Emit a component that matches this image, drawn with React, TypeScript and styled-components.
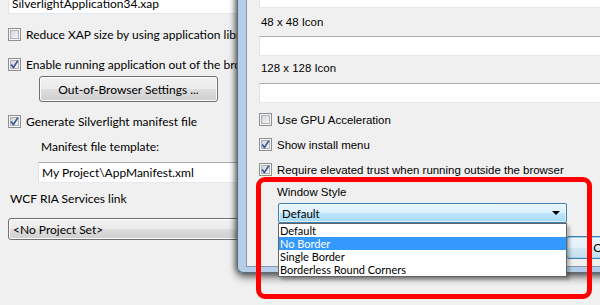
import React from 'react';
import styled, { createGlobalStyle } from 'styled-components';

const GlobalStyle = createGlobalStyle`
  html, body { margin: 0; padding: 0; background: #f0f0f0; }
  * { box-sizing: border-box; }
`;

const Desktop = styled.div`
  position: relative;
  width: 600px;
  height: 305px;
  overflow: hidden;
  background: #f0f0f0;
  color: #000;
`;

const PropertyPage = styled.div`
  position: absolute;
  left: 0;
  top: -8px;
  width: 340px;
  padding-left: 8px;
  display: flex;
  flex-direction: column;
  font-family: Lato, 'Noto Sans', sans-serif;
  font-size: 12px;
`;

const TextBox = styled.div<{ $mt?: number; $ml?: number; $w: number; $h?: number }>`
  margin-top: ${({ $mt }) => $mt ?? 0}px;
  margin-left: ${({ $ml }) => $ml ?? 0}px;
  width: ${({ $w }) => $w}px;
  height: ${({ $h }) => $h ?? 22}px;
  background: #fff;
  border: 1px solid #abadb3;
  border-left-color: #e2e3ea;
  border-right-color: #dbdfe6;
  border-bottom-color: #e3e9ef;
  padding: 0 3px;
  display: flex;
  align-items: center;
  white-space: nowrap;
`;

const CheckRow = styled.div<{ $mt: number }>`
  margin-top: ${({ $mt }) => $mt}px;
  height: 15px;
  display: flex;
  align-items: center;
  gap: 5px;
  white-space: nowrap;
`;

const Label = styled.div<{ $mt: number; $ml: number }>`
  margin-top: ${({ $mt }) => $mt}px;
  margin-left: ${({ $ml }) => $ml}px;
  height: 16px;
  line-height: 16px;
  white-space: nowrap;
`;

const PushButton = styled.div<{ $mt: number; $ml: number; $w: number }>`
  margin-top: ${({ $mt }) => $mt}px;
  margin-left: ${({ $ml }) => $ml}px;
  width: ${({ $w }) => $w}px;
  height: 26px;
  border: 1px solid #707070;
  border-radius: 3px;
  background: linear-gradient(#f2f2f2 0%, #ebebeb 50%, #dddddd 51%, #cfcfcf 100%);
  box-shadow: inset 0 0 0 1px #fcfcfc;
  display: flex;
  align-items: center;
  justify-content: center;
  white-space: nowrap;
`;

const ComboBox = styled.div<{ $mt: number; $w: number }>`
  margin-top: ${({ $mt }) => $mt}px;
  width: ${({ $w }) => $w}px;
  height: 22px;
  border: 1px solid #707070;
  border-radius: 3px;
  background: linear-gradient(#f2f2f2 0%, #ebebeb 50%, #dddddd 51%, #cfcfcf 100%);
  box-shadow: inset 0 0 0 1px #fcfcfc;
  padding-left: 4px;
  display: flex;
  align-items: center;
  white-space: nowrap;
`;

/* dialog window */
const DialogFrame = styled.div`
  position: absolute;
  left: 237px;
  top: -30px;
  width: 420px;
  height: 303px;
  padding: 0 0 5px 8px;
  border: 1px solid #5d6a78;
  border-right: none;
  border-bottom-left-radius: 6px;
  background: linear-gradient(90deg, #b4cde8 0%, #c6dbf1 40%, #aac6e4 100%);
  box-shadow: 0 4px 9px rgba(0, 0, 0, 0.6), -2px 0 5px rgba(0, 0, 0, 0.35);
`;

const DialogClient = styled.div`
  height: 100%;
  background: #f0f0f0;
  border: 1px solid #8597ad;
  border-right: none;
  border-top: none;
  padding-left: 12px;
  display: flex;
  flex-direction: column;
  font-family: 'Liberation Sans', Arial, sans-serif;
  font-size: 11.45px;
`;

const DialogLabel = styled.div<{ $mt: number; $ml?: number }>`
  margin-top: ${({ $mt }) => $mt}px;
  margin-left: ${({ $ml }) => $ml ?? 2}px;
  height: 16px;
  line-height: 16px;
  white-space: nowrap;
`;

const ComboWrap = styled.div`
  position: relative;
  margin-top: 3px;
  margin-left: 19px;
  width: 289px;
  font-family: Lato, 'Noto Sans', sans-serif;
  font-size: 11.5px;
`;

const OpenCombo = styled.div`
  height: 20px;
  border: 1px solid #3c7fb1;
  border-radius: 2px;
  background: linear-gradient(#eaf6fd 0%, #d9f0fc 50%, #bee6fd 51%, #a7d9f5 100%);
  box-shadow: inset 0 0 0 1px rgba(255, 255, 255, 0.6);
  padding: 0 6px 0 3px;
  display: flex;
  align-items: center;
  justify-content: space-between;
`;

const Arrow = styled.span`
  width: 0;
  height: 0;
  border-left: 4px solid transparent;
  border-right: 4px solid transparent;
  border-top: 4px solid #000;
`;

const DropList = styled.div`
  position: absolute;
  left: 0;
  top: 100%;
  width: 289px;
  background: #fff;
  border: 1px solid #646464;
  box-shadow: 3px 3px 3px rgba(0, 0, 0, 0.25);
  z-index: 3;
  font-size: 11px;
`;

const DropItem = styled.div<{ $selected?: boolean }>`
  height: 13px;
  line-height: 13px;
  padding-left: 1px;
  background: ${({ $selected }) => ($selected ? '#3399ff' : 'transparent')};
  color: ${({ $selected }) => ($selected ? '#fff' : '#000')};
  white-space: nowrap;
  overflow: hidden;
`;

const DefaultButton = styled.div`
  margin-top: 13px;
  margin-left: 307px;
  width: 72px;
  height: 23px;
  border: 1px solid #3c7fb1;
  border-radius: 3px;
  background: linear-gradient(#eaf6fd 0%, #e4f1f9 50%, #d3e8f4 51%, #c3dcec 100%);
  box-shadow: inset 0 0 0 1px #9cd5f4;
  display: flex;
  align-items: center;
  justify-content: center;
  font-family: Lato, 'Noto Sans', sans-serif;
  font-size: 12px;
`;

const Highlight = styled.div`
  position: absolute;
  left: 256px;
  top: 177px;
  width: 336px;
  height: 122px;
  border: 5px solid #ff0000;
  border-radius: 9px;
  z-index: 5;
  pointer-events: none;
`;

const CheckBox = ({ checked }: { checked?: boolean }) => (
  <svg width="13" height="13" viewBox="0 0 13 13">
    <defs>
      <linearGradient id="cbfill" x1="0" y1="0" x2="1" y2="1">
        <stop offset="0" stopColor="#cfd3d9" />
        <stop offset="1" stopColor="#f8f8f8" />
      </linearGradient>
    </defs>
    <rect x="0.5" y="0.5" width="12" height="12" fill="#f6f6f6" stroke="#8e8f8f" />
    <rect x="2.5" y="2.5" width="8" height="8" fill="url(#cbfill)" stroke="#aeb3b9" />
    {checked && (
      <path d="M3.2 6.4 L5.4 9.6 L9.8 2.6" stroke="#3f5497" strokeWidth="1.7" fill="none" strokeLinejoin="round" />
    )}
  </svg>
);

const windowStyles = ['Default', 'No Border', 'Single Border', 'Borderless Round Corners'];

export default function App() {
  return (
    <Desktop>
      <GlobalStyle />
      <PropertyPage>
        <TextBox $w={330}>SilverlightApplication34.xap</TextBox>
        <CheckRow $mt={13}>
          <CheckBox />
          <span>Reduce XAP size by using application library caching</span>
        </CheckRow>
        <CheckRow $mt={15}>
          <CheckBox checked />
          <span>Enable running application out of the browser</span>
        </CheckRow>
        <PushButton $mt={4} $ml={31} $w={179}>Out-of-Browser Settings ...</PushButton>
        <CheckRow $mt={12}>
          <CheckBox checked />
          <span>Generate Silverlight manifest file</span>
        </CheckRow>
        <Label $mt={10} $ml={33}>Manifest file template:</Label>
        <TextBox $mt={7} $ml={30} $w={300} $h={21}>My Project\AppManifest.xml</TextBox>
        <Label $mt={8} $ml={2}>WCF RIA Services link</Label>
        <ComboBox $mt={11} $w={330}>&lt;No Project Set&gt;</ComboBox>
      </PropertyPage>

      <DialogFrame>
        <DialogClient>
          <TextBox $mt={16} $w={400} $h={21} />
          <DialogLabel $mt={6}>48 x 48 Icon</DialogLabel>
          <TextBox $mt={6} $w={400} $h={20} />
          <DialogLabel $mt={4}>128 x 128 Icon</DialogLabel>
          <TextBox $mt={7} $w={400} $h={20} />
          <CheckRow $mt={9}>
            <CheckBox />
            <span>Use GPU Acceleration</span>
          </CheckRow>
          <CheckRow $mt={10}>
            <CheckBox checked />
            <span>Show install menu</span>
          </CheckRow>
          <CheckRow $mt={10}>
            <CheckBox checked />
            <span>Require elevated trust when running outside the browser</span>
          </CheckRow>
          <DialogLabel $mt={7} $ml={18}>Window Style</DialogLabel>
          <ComboWrap>
            <OpenCombo>
              <span>Default</span>
              <Arrow />
            </OpenCombo>
            <DropList>
              {windowStyles.map((s) => (
                <DropItem key={s} $selected={s === 'No Border'}>
                  {s}
                </DropItem>
              ))}
            </DropList>
          </ComboWrap>
          <DefaultButton>OK</DefaultButton>
        </DialogClient>
      </DialogFrame>

      <Highlight />
    </Desktop>
  );
}
